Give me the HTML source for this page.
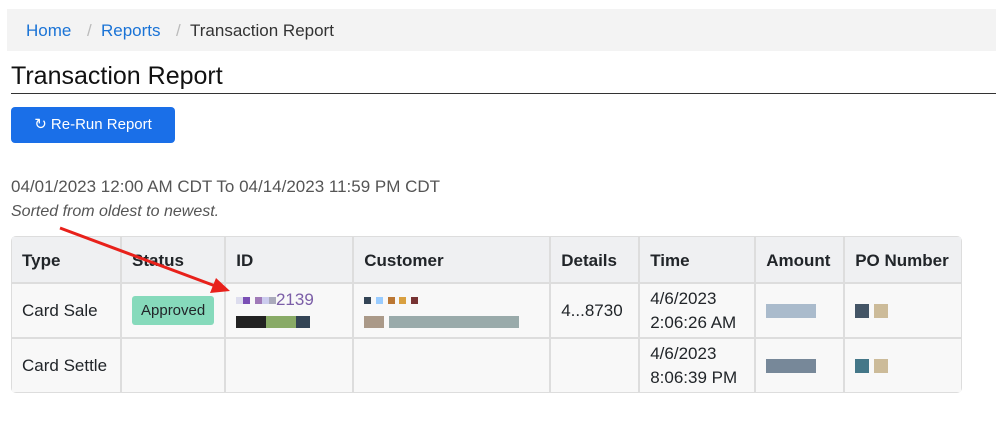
<!DOCTYPE html>
<html><head><style>
body{margin:0;width:996px;height:421px;background:#fff;font-family:"Liberation Sans",sans-serif;position:relative;overflow:hidden;color:#212529}
.a{position:absolute}
.bc{left:7px;top:9px;width:989px;height:42px;background:#f3f3f3;font-size:17px;line-height:44px}
.bc span{position:absolute;top:0}
table{position:absolute;left:11px;top:236px;border-collapse:separate;border-spacing:0;border:1px solid #ddd;border-radius:5px;font-size:17px}
td,th{border-right:2px solid #ddd;border-bottom:2px solid #ddd;padding:0 10px;text-align:left;vertical-align:middle;background:#f8f8f8;line-height:22px}
th{background:#eff0f2;height:42px;font-weight:bold;padding-top:3px}
td:last-child,th:last-child{border-right:none}
tr:last-child td{border-bottom:none}
.px{display:inline-block;width:7px;height:7px;vertical-align:middle}
</style></head><body>
<div class="a bc"><span style="left:19px;color:#1a73d6">Home</span><span style="left:80px;color:#bbb">/</span><span style="left:94px;color:#1a73d6">Reports</span><span style="left:169px;color:#bbb">/</span><span style="left:183px;color:#333">Transaction Report</span></div>
<div class="a" style="left:11px;top:62px;font-size:25px;color:#111">Transaction Report</div>
<div class="a" style="left:11px;top:93px;width:985px;height:1px;background:#333"></div>
<div class="a" style="left:11px;top:107px;width:164px;height:36px;background:#1a6fe8;border-radius:4px;color:#fff;font-size:15px;line-height:36px;text-align:center">&#x21bb; Re-Run Report</div>
<div class="a" style="left:11px;top:177px;font-size:17px;color:#555">04/01/2023 12:00 AM CDT To 04/14/2023 11:59 PM CDT</div>
<div class="a" style="left:11px;top:203px;font-size:16px;color:#555;font-style:italic">Sorted from oldest to newest.</div>
<table>
<tr><th style="width:88px">Type</th><th style="width:82px">Status</th><th style="width:106px">ID</th><th style="width:175px">Customer</th><th style="width:67px">Details</th><th style="width:94px">Time</th><th style="width:67px">Amount</th><th style="width:96px">PO Number</th></tr>
<tr style="height:55px"><td>Card Sale</td><td><span style="background:#86dabb;padding:6px 9px;border-radius:3px;font-size:15px">Approved</span></td>
<td style="color:#7b5ea7"><span class="px" style="background:#dde"></span><span class="px" style="background:#7a4fb5"></span> <span class="px" style="background:#a07ab8"></span><span class="px" style="background:#cce"></span><span class="px" style="background:#aab"></span>2139<br><span class="px" style="background:#222;width:30px;height:12px"></span><span class="px" style="background:#8a6;width:30px;height:12px"></span><span class="px" style="background:#345;width:14px;height:12px"></span></td>
<td><span class="px" style="background:#345"></span> <span class="px" style="background:#9cf"></span> <span class="px" style="background:#b73"></span> <span class="px" style="background:#d9a040"></span> <span class="px" style="background:#733"></span><br><span class="px" style="background:#a98;width:20px;height:12px"></span> <span class="px" style="background:#9aa;width:130px;height:12px"></span></td>
<td>4...8730</td><td style="line-height:24px">4/6/2023<br>2:06:26 AM</td><td><span class="px" style="background:#abc;width:50px;height:14px"></span></td><td><span class="px" style="background:#456;width:14px;height:14px"></span> <span class="px" style="background:#cb9;width:14px;height:14px"></span></td></tr>
<tr style="height:53px"><td>Card Settle</td><td></td><td></td><td></td><td></td><td style="line-height:24px">4/6/2023<br>8:06:39 PM</td><td><span class="px" style="background:#789;width:50px;height:14px"></span></td><td><span class="px" style="background:#478;width:14px;height:14px"></span> <span class="px" style="background:#cb9;width:14px;height:14px"></span></td></tr>
</table>
<svg class="a" style="left:0;top:0" width="996" height="421"><line x1="60" y1="228" x2="218" y2="287" stroke="#e8211b" stroke-width="3"/><polygon points="230,291 210,293 216,278" fill="#e8211b"/></svg>
</body></html>
